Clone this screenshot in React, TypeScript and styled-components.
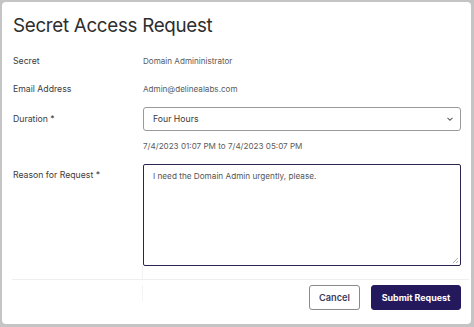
import React from "react";
import styled, { createGlobalStyle } from "styled-components";

const Global = createGlobalStyle`
  html, body { margin: 0; padding: 0; background: #c4c4c4; }
  body { width: 474px; height: 327px; overflow: hidden; font-family: Inter, "Noto Sans", sans-serif; }
  * { box-sizing: border-box; }
`;

const Dialog = styled.div`
  margin: 2px 3px 3px 2px;
  height: 322px;
  background: #fff;
  border-radius: 4px;
  display: flex;
  flex-direction: column;
`;

const Header = styled.div`
  padding: 11px 11px 8px;
  height: 45px;
`;

const Title = styled.h1`
  margin: 0;
  font-size: 18.8px;
  line-height: 26px;
  font-weight: 400;
  color: #2e2e2e;
  letter-spacing: -0.3px;
`;

const Row = styled.div<{ $h: number; $top?: number; $align?: string }>`
  display: grid;
  grid-template-columns: 130px 1fr;
  align-items: ${(p) => p.$align || "center"};
  height: ${(p) => p.$h}px;
  margin-top: ${(p) => p.$top || 0}px;
  padding: 0 10px 0 11px;
`;

const Label = styled.div<{ $pt?: number }>`
  font-size: 8.7px;
  color: #3c3c3c;
  padding-top: ${(p) => p.$pt || 0}px;
`;

const Value = styled.div`
  font-size: 8.1px;
  color: #5a5a5a;
`;

const SelectBox = styled.div`
  height: 24px;
  border: 1px solid #9a9a9a;
  border-radius: 3px;
  display: flex;
  align-items: center;
  justify-content: space-between;
  padding: 0 6px 0 9px;
  font-size: 8.7px;
  color: #3a3a3a;
`;

const TextArea = styled.div`
  height: 102px;
  border: 1.5px solid #2b2650;
  border-radius: 2px;
  padding: 6px 9px;
  font-size: 8.2px;
  color: #555;
  position: relative;
`;

const Grip = styled.svg`
  position: absolute;
  right: 1px;
  bottom: 1px;
`;

const Spacer = styled.div`
  height: 13px;
  display: grid;
  grid-template-columns: 130px 1fr;
  padding-left: 11px;
`;

const Gutter = styled.div<{ $h: number }>`
  height: ${(p) => p.$h}px;
  border-right: 1px solid #f3f3f3;
`;

const Footer = styled.div`
  border-top: 1px solid #efefef;
  margin: 0 2px 0 10px;
  padding-top: 5px;
  display: flex;
  align-items: flex-start;
`;

const FooterGutter = styled.div`
  width: 131px;
  height: 16px;
  border-right: 1px solid #f3f3f3;
`;

const Buttons = styled.div`
  margin-left: auto;
  margin-right: 8px;
  display: flex;
  gap: 11px;
`;

const Button = styled.button<{ $primary?: boolean; $w: number }>`
  width: ${(p) => p.$w}px;
  height: 25px;
  border-radius: 3px;
  font-family: Inter, "Noto Sans", sans-serif;
  font-size: ${(p) => (p.$primary ? 8.9 : 9.2)}px;
  font-weight: ${(p) => (p.$primary ? 700 : 600)};
  border: 1px solid ${(p) => (p.$primary ? "#24195d" : "#8a8a8a")};
  background: ${(p) => (p.$primary ? "#24195d" : "#fff")};
  color: ${(p) => (p.$primary ? "#fff" : "#3d3a5c")};
  padding: 0;
`;

export default function App() {
  return (
    <>
      <Global />
      <Dialog>
        <Header>
          <Title>Secret Access Request</Title>
        </Header>
        <Row $h={28}>
          <Label>Secret</Label>
          <Value>Domain Admininistrator</Value>
        </Row>
        <Row $h={28}>
          <Label>Email Address</Label>
          <Value>Admin@delinealabs.com</Value>
        </Row>
        <Row $h={24} $top={4}>
          <Label>Duration *</Label>
          <SelectBox>
            <span>Four Hours</span>
            <svg width="8" height="6" viewBox="0 0 8 6">
              <path d="M1.5 1.8 L4 4.2 L6.5 1.8" fill="none" stroke="#666" strokeWidth="1.1" />
            </svg>
          </SelectBox>
        </Row>
        <Row $h={30}>
          <div />
          <Value>7/4/2023 01:07 PM to 7/4/2023 05:07 PM</Value>
        </Row>
        <Row $h={102} $top={3} $align="start">
          <Label $pt={6}>Reason for Request *</Label>
          <TextArea>
            I need the Domain Admin urgently, please.
            <Grip width="7" height="7" viewBox="0 0 7 7">
              <path d="M6 1 L1 6 M6 4 L4 6" stroke="#999" strokeWidth="0.8" />
            </Grip>
          </TextArea>
        </Row>
        <Spacer>
          <Gutter $h={13} />
        </Spacer>
        <Footer>
          <FooterGutter />
          <Buttons>
            <Button $w={51}>Cancel</Button>
            <Button $w={90} $primary>
              Submit Request
            </Button>
          </Buttons>
        </Footer>
      </Dialog>
    </>
  );
}
